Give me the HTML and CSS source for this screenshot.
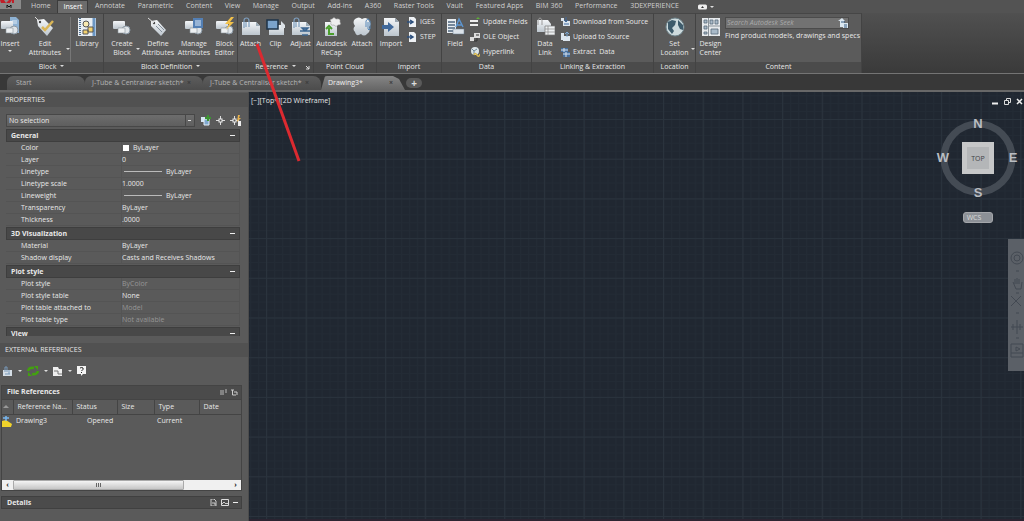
FILE: index.html
```
<!DOCTYPE html>
<html lang="en">

<head>
    <meta charset="UTF-8">
    <meta name="viewport" content="width=device-width, initial-scale=1.0">
    <title>Drawing3</title>
    <link rel="stylesheet" href="styles.css">
</head>

<body>
    <!-- Shared icons -->
    <svg class="defs" width="0" height="0" aria-hidden="true">
        <linearGradient id="face" x1="0" y1="0" x2="0" y2="1">
            <stop offset="0" stop-color="#f4f6f8" />
            <stop offset="1" stop-color="#bcc5cd" />
        </linearGradient>
        <symbol id="blocks" viewBox="0 0 20 20">
            <rect x="1" y="4" width="12" height="8" rx="1" fill="url(#face)" />
            <circle cx="14" cy="13" r="4" fill="#dfe4e8" stroke="#8b99a5" />
            <path d="M6 11h7v5H6z" fill="#edf0f2" stroke="#8a949c" stroke-width=".6" />
        </symbol>
        <symbol id="page" viewBox="0 0 20 20">
            <path d="M1 5h14l4 4v9H1z" fill="url(#face)" />
            <path d="M15 5v4h4" fill="#9cabb6" />
        </symbol>
        <symbol id="clip" viewBox="0 0 20 20">
            <path d="M3 11V4q0-3 2.500-3T8 4v6M5 10V5" fill="none" stroke="#7d9dbd" stroke-width="1.200" />
        </symbol>
        <symbol id="smallpage" viewBox="0 0 10 10">
            <path d="M2 0h5l2 2v8H2z" fill="#eef1f4" />
            <path d="M0 5h5M3 3l3 2-3 2" fill="none" stroke="#2c4f7c" stroke-width="1.500" />
        </symbol>
    </svg>

    <nav class="menu">
        <button class="app-button" aria-label="Application menu">
            <svg width="20" height="9" viewBox="0 0 20 9"><path d="M0 0h4l2 3 3-3h3l-2 3H1zM12 0h2v3h-2z" fill="#c01f29" /><path d="M7 8V5l2 2 2-2v3" fill="none" stroke="#111" /></svg>
        </button>
        <div class="menu-links">
            <a href="#">Home</a>
            <a href="#" class="current">Insert</a>
            <a href="#">Annotate</a>
            <a href="#">Parametric</a>
            <a href="#">Content</a>
            <a href="#">View</a>
            <a href="#">Manage</a>
            <a href="#">Output</a>
            <a href="#">Add-ins</a>
            <a href="#">A360</a>
            <a href="#">Raster Tools</a>
            <a href="#">Vault</a>
            <a href="#">Featured Apps</a>
            <a href="#">BIM 360</a>
            <a href="#">Performance</a>
            <a href="#">3DEXPERIENCE</a>
        </div>
        <button class="minimize" aria-label="Minimize ribbon">
            <svg width="16" height="6" viewBox="0 0 16 6"><rect width="9" height="5" y=".5" rx="1.500" fill="#eee" /><path d="M3 4l1.500-2L6 4z" fill="#333" /><path d="M12 2h4l-2 2z" fill="#ddd" /></svg>
        </button>
    </nav>

    <div class="ribbon">
        <section class="panel block">
            <div class="tools">
                <button class="tool">
                    <svg class="icon" viewBox="0 0 20 20"><path d="M10 0h6l3 3v13h-9z" fill="#8eb2d4" /><path d="M12 4h5M12 6h5" stroke="#dfeaf4" /><use href="#blocks" /></svg>
                    <span>Insert</span><i class="arrow"></i>
                </button>
                <button class="tool has-side-arrow">
                    <svg class="icon" viewBox="0 0 20 20"><path d="M2 3l7-1 9 9-6 8-9-10z" fill="url(#face)" /><path d="M0 0l5 5" stroke="#ddd" /><circle cx="5" cy="5" r="1.200" fill="#444" /><path d="M7 10l3 3 8-9" fill="none" stroke="#d9b557" stroke-width="2.500" /></svg>
                    <span>Edit<br>Attributes</span><i class="arrow"></i>
                </button>
                <button class="tool divided">
                    <svg class="icon" viewBox="0 0 20 20"><rect x="1" y="1" width="18" height="18" fill="#e9eef2" /><path d="M3 1v18" stroke="#4d6e91" stroke-width="2" stroke-dasharray="1 1" /><path d="M17 1v18" stroke="#6b97c4" stroke-width="3" /><circle cx="9" cy="7" r="3" fill="#f8e9af" stroke="#555" /><path d="M6 13h5v4H6zM11 10h5v5h-5z" fill="#f3d16e" stroke="#555" /></svg>
                    <span>Library</span>
                </button>
            </div>
            <h2>Block <i class="arrow"></i></h2>
        </section>

        <section class="panel definition">
            <div class="tools">
                <button class="tool has-side-arrow">
                    <svg class="icon" viewBox="0 0 20 20"><use href="#blocks" /></svg>
                    <span>Create<br>Block</span><i class="arrow"></i>
                </button>
                <button class="tool">
                    <svg class="icon" viewBox="0 0 20 20"><path d="M3 4l6-1 9 10-5 6L3 9z" fill="url(#face)" /><path d="M8 9l6 6M10 7l6 6" stroke="#84909c" /><circle cx="6" cy="6" r="1.200" fill="#444" /><path d="M0 1l6 5" stroke="#ddd" /></svg>
                    <span>Define<br>Attributes</span>
                </button>
                <button class="tool">
                    <svg class="icon" viewBox="0 0 20 20"><use href="#blocks" /><rect x="9" y="1" width="10" height="10" fill="#537fb4" /><path d="M11 4h6M11 6h6M11 8h6" stroke="#dce9f6" /></svg>
                    <span>Manage<br>Attributes</span>
                </button>
                <button class="tool">
                    <svg class="icon" viewBox="0 0 20 20"><use href="#blocks" /><path d="M16 0l-6 7h4l-3 6 8-8h-4l4-5z" fill="#f2c14a" /></svg>
                    <span>Block<br>Editor</span>
                </button>
            </div>
            <h2>Block Definition <i class="arrow"></i></h2>
        </section>

        <section class="panel reference">
            <div class="tools">
                <button class="tool">
                    <svg class="icon" viewBox="0 0 20 20"><use href="#page" /><use href="#clip" /></svg>
                    <span>Attach</span>
                </button>
                <button class="tool">
                    <svg class="icon" viewBox="0 0 20 20"><path d="M3 8h15v10H3z" fill="url(#face)" /><path d="M1 3h11v9H1z" fill="#7ba3cb" stroke="#1e3348" stroke-width="1.500" /><path d="M15 4l4 4v3h-4z" fill="#dce2e7" /></svg>
                    <span>Clip</span>
                </button>
                <button class="tool">
                    <svg class="icon" viewBox="0 0 20 20"><use href="#page" /><use href="#clip" /><path d="M9 14h10M11 11h6l-3 3zM11 18h6" fill="#5b83af" stroke="#3c658f" stroke-width="1.500" /></svg>
                    <span>Adjust</span>
                </button>
            </div>
            <h2>Reference <i class="arrow"></i><button class="launcher" aria-label="Open external references"><svg width="5" height="5" viewBox="0 0 5 5"><path d="M1 1l3 3M4 1v3H1" fill="none" stroke="#ddd" /></svg></button></h2>
        </section>

        <section class="panel cloud">
            <div class="tools">
                <button class="tool">
                    <svg class="icon" viewBox="0 0 20 20"><path d="M3 5h12v14H3z" fill="url(#face)" /><path d="M10 2q2-3 4 0 5-1 4 3 2 3-2 3-2 3-4 0-4 1-3-3-2-3 1-3z" fill="#eee" stroke="#888" stroke-width=".5" /><path d="M12 17H7v-6M4 12l3-3 3 3" fill="none" stroke="#4a9e2b" stroke-width="2" /></svg>
                    <span>Autodesk<br>ReCap</span>
                </button>
                <button class="tool">
                    <svg class="icon" viewBox="0 0 20 20"><path d="M3 2q4-3 7 0 5-3 7 2 3 3 0 6 2 5-2 7-3 3-6 0-5 3-6-2-3-3 0-6-3-4 0-7z" fill="url(#face)" /><path d="M14 10V4q2-4 4 0v8q-1 2-2 0V5" fill="none" stroke="#5989b9" /></svg>
                    <span>Attach</span>
                </button>
            </div>
            <h2>Point Cloud</h2>
        </section>

        <section class="panel import">
            <div class="tools">
                <button class="tool">
                    <svg class="icon" viewBox="0 0 20 20"><path d="M3 1h11l4 4v14H3z" fill="url(#face)" /><path d="M14 1v4h4" fill="#97a4af" /><path d="M1 8h6V5l6 5-6 5v-3H1z" fill="#41699b" /></svg>
                    <span>Import</span>
                </button>
                <div class="list">
                    <button><svg viewBox="0 0 10 10"><use href="#smallpage" /></svg>IGES</button>
                    <button><svg viewBox="0 0 10 10"><use href="#smallpage" /></svg>STEP</button>
                </div>
            </div>
            <h2>Import</h2>
        </section>

        <section class="panel data">
            <div class="tools">
                <button class="tool">
                    <svg class="icon" viewBox="0 0 20 20"><path d="M2 2h9v14H2z" fill="#e8edf1" /><path d="M3 5h7M3 8h7M3 11h7M3 14h5" stroke="#4f667d" stroke-width="1.500" /><path d="M11 10l3-8 4 8M12 8h5" fill="none" stroke="#5d95cf" stroke-width="1.500" /><path d="M8 12h11v5H8z" fill="#dce3ea" stroke="#6a7e92" stroke-width=".5" /></svg>
                    <span>Field</span>
                </button>
                <div class="list">
                    <button><svg viewBox="0 0 10 10"><path d="M0 4h8M0 8h8" stroke="#eee" stroke-width="2" /><path d="M6 2l2-2 2 2" fill="#5fae39" /></svg>Update Fields</button>
                    <button><svg viewBox="0 0 10 10"><path d="M4 1h6v5H4zM0 5h4v4H0z" fill="#ddd" /><path d="M6 3h3M7 6v3H4" fill="none" stroke="#333" /></svg>OLE Object</button>
                    <button><svg viewBox="0 0 10 10"><circle cx="5" cy="4" r="4" fill="#dbe4e8" /><path d="M2 2l2 2 3-2M4 4v4" stroke="#6e8797" fill="none" /><path d="M4 8q1-3 3 0t3-1" fill="none" stroke="#d9b84c" stroke-width="1.500" /></svg>Hyperlink</button>
                </div>
            </div>
            <h2>Data</h2>
        </section>

        <section class="panel linking">
            <div class="tools">
                <button class="tool">
                    <svg class="icon" viewBox="0 0 20 20"><path d="M2 3h11l3 4v8H2z" fill="url(#face)" /><path d="M3 8V3q2-4 4 0v5" fill="none" stroke="#999" /><path d="M10 9h10v9H10z" fill="#edf0f2" stroke="#777" stroke-width=".7" /><path d="M10 12h10M10 15h10M13 9v9" stroke="#888" stroke-width=".7" /></svg>
                    <span>Data<br>Link</span>
                </button>
                <div class="list">
                    <button><svg viewBox="0 0 10 10"><path d="M1 1h3v3H1zM3 4h7v5H3z" fill="#dce5ee" /><path d="M6 0v4M4 3l2 2 2-2M4 7h5" fill="none" stroke="#416b9e" /></svg>Download from Source</button>
                    <button><svg viewBox="0 0 10 10"><path d="M1 1h3v7H1zM3 4h7v5H3z" fill="#dce5ee" /><path d="M7 5V0M5 2l2-2 2 2" fill="none" stroke="#7ba5d0" /></svg>Upload to Source</button>
                    <button><svg viewBox="0 0 10 10"><path d="M1 1h7v4H1zM3 5h7v5H3z" fill="#46709f" /><path d="M1 3h7M4 1v4M3 7h7M6 5v5" stroke="#d6e2ef" /></svg>Extract&nbsp; Data</button>
                </div>
            </div>
            <h2>Linking &amp; Extraction</h2>
        </section>

        <section class="panel location">
            <div class="tools">
                <button class="tool has-side-arrow">
                    <svg class="icon" viewBox="0 0 20 20"><circle cx="10" cy="10" r="9" fill="#cddadd" stroke="#6f858d" /><path d="M3 5l4-2 4 1-1 4-3 3 2 3-2 3-4-5zM13 3l5 5v5l-3-1-2-4z" fill="#3e5b6b" /></svg>
                    <span>Set<br>Location</span><i class="arrow"></i>
                </button>
            </div>
            <h2>Location</h2>
        </section>

        <section class="panel content">
            <div class="tools">
                <button class="tool">
                    <svg class="icon" viewBox="0 0 20 20"><path d="M1 1h18v18H1z" fill="#e7eaed" /><path d="M3 3h3v3H3zM3 9h3v3H3zM3 15h3v2H3zM9 3h3v4H9zM14 3h3v4h-3zM10 12h7v5h-7z" fill="#a9bac9" stroke="#596a78" stroke-width=".8" /><path d="M7.500 1v18M8 9h11" stroke="#8a939a" /></svg>
                    <span>Design<br>Center</span>
                </button>
                <div class="seek">
                    <div class="search-box">
                        <input type="text" placeholder="Search Autodesk Seek" aria-label="Search Autodesk Seek">
                        <button aria-label="Search"><svg width="10" height="10" viewBox="0 0 10 10"><path d="M0 3l4-3 3 3zM2 3h4v6H2zM5 5h5v5H5z" fill="#dbe7f0" /><path d="M6 7h3M6 9h3M3 4h4" stroke="#365b80" /></svg></button>
                    </div>
                    <p>Find product models, drawings and specs</p>
                </div>
            </div>
            <h2>Content</h2>
        </section>
    </div>

    <div class="file-tabs">
        <a href="#" class="start">Start</a>
        <a href="#">J-Tube &amp; Centraliser sketch* <b>×</b></a>
        <a href="#">J-Tube &amp; Centraliser sketch* <b>×</b></a>
        <a href="#" class="active">Drawing3* <b>×</b></a>
        <button aria-label="New drawing">+</button>
    </div>

    <main>
        <aside>
            <section class="palette properties">
                <h1>PROPERTIES</h1>
                <div class="selection">
                    <select aria-label="Selection">
                        <option>No selection</option>
                    </select>
                    <button aria-label="Toggle pickadd"><svg width="11" height="11" viewBox="0 0 11 11"><path d="M1 2h6v5H1z" fill="#d6e6f4" /><path d="M4 4h5v6H4z" fill="#7fa8cf" stroke="#e5eef6" /><path d="M8 0v6M5 3h6" stroke="#3c9431" stroke-width="2" /></svg></button>
                    <button aria-label="Select objects"><svg width="11" height="11" viewBox="0 0 11 11"><path d="M5.500 1v9M1 5.500h9" stroke="#ddd" /><rect x="4" y="4" width="3" height="3" fill="#555" stroke="#eee" /></svg></button>
                    <button aria-label="Quick select"><svg width="11" height="11" viewBox="0 0 11 11"><path d="M4.500 1v9M0 5.500h9" stroke="#ddd" /><rect x="3" y="4" width="3" height="3" fill="#555" stroke="#eee" /><path d="M8 0h2L9 3h2L7 7z" fill="#e9b34d" /><path d="M8 6h3v5H8z" fill="#eee" /></svg></button>
                </div>
                <div class="groups">
                    <h3>General <button aria-label="Collapse General"></button></h3>
                    <table>
                        <tr><th>Color</th><td><i class="swatch"></i>ByLayer</td></tr>
                        <tr><th>Layer</th><td>0</td></tr>
                        <tr><th>Linetype</th><td><i class="line"></i>ByLayer</td></tr>
                        <tr><th>Linetype scale</th><td>1.0000</td></tr>
                        <tr><th>Lineweight</th><td><i class="line"></i>ByLayer</td></tr>
                        <tr><th>Transparency</th><td>ByLayer</td></tr>
                        <tr><th>Thickness</th><td>.0000</td></tr>
                    </table>
                    <h3>3D Visualization <button aria-label="Collapse 3D Visualization"></button></h3>
                    <table>
                        <tr><th>Material</th><td>ByLayer</td></tr>
                        <tr><th>Shadow display</th><td>Casts and Receives Shadows</td></tr>
                    </table>
                    <h3>Plot style <button aria-label="Collapse Plot style"></button></h3>
                    <table>
                        <tr><th>Plot style</th><td class="off">ByColor</td></tr>
                        <tr><th>Plot style table</th><td>None</td></tr>
                        <tr><th>Plot table attached to</th><td class="off">Model</td></tr>
                        <tr><th>Plot table type</th><td class="off">Not available</td></tr>
                    </table>
                    <h3>View <button aria-label="Collapse View"></button></h3>
                </div>
            </section>

            <section class="palette xrefs">
                <h1>EXTERNAL REFERENCES</h1>
                <div class="toolbar">
                    <button aria-label="Attach file"><svg width="10" height="10" viewBox="0 0 10 10"><path d="M0 4h9v6H0z" fill="#d5dee6" /><path d="M2 6V1h2v5M6 4v4M2 8h5" fill="none" stroke="#7899ba" /></svg><i class="arrow"></i></button>
                    <button aria-label="Refresh"><svg width="12" height="10" viewBox="0 0 12 10"><path d="M1 5q1-4 6-3M11 5q-1 4-6 3" fill="none" stroke="#43a010" stroke-width="2.500" /><path d="M7 0h4v4zM1 6v4h4z" fill="#43a010" /></svg><i class="arrow"></i></button>
                    <button aria-label="Change path"><svg width="10" height="10" viewBox="0 0 10 10"><path d="M0 1h5l1 2h3v7H0z" fill="#eee" /><path d="M1 5h4M5 5v3h4" fill="none" stroke="#777" /></svg><i class="arrow"></i></button>
                    <button aria-label="Help"><svg width="9" height="10" viewBox="0 0 9 10"><path d="M0 0h9v8H6l-2 2V8H0z" fill="#f4f4f4" /><path d="M3 2q2-1 3 0t-1.500 3M4.500 6v1" fill="none" stroke="#222" /></svg></button>
                </div>
                <div class="files">
                    <h3>File References
                        <button aria-label="List view"><svg width="7" height="7" viewBox="0 0 7 7"><path d="M1 1v5M3 1v5M5 1h2M5 3h2" stroke="#bbb" /></svg></button>
                        <button aria-label="Tree view"><svg width="7" height="7" viewBox="0 0 7 7"><path d="M0 1h3M1.500 1v5H5M3 3h3v3" fill="none" stroke="#ccc" /></svg></button>
                    </h3>
                    <table>
                        <thead>
                            <tr><th class="mark"><i class="sort"></i></th><th class="name">Reference Na...</th><th class="status">Status</th><th class="size">Size</th><th class="type">Type</th><th>Date</th></tr>
                        </thead>
                        <tbody>
                            <tr><td class="mark"><svg width="10" height="11" viewBox="0 0 10 11"><path d="M0 5l4-1 6 4-1 3H0z" fill="#f1d32b" /><path d="M4 0v5M1 2h6" stroke="#78b7ef" stroke-width="1.500" /></svg></td><td>Drawing3</td><td class="opened">Opened</td><td></td><td>Current</td><td></td></tr>
                        </tbody>
                    </table>
                    <div class="scrollbar"><button aria-label="Scroll left">‹</button><div class="track"><div class="thumb"><i></i><i></i><i></i></div></div><button aria-label="Scroll right">›</button></div>
                </div>
                <div class="details">
                    <h3>Details
                        <button aria-label="Details"><svg width="7" height="7" viewBox="0 0 7 7"><path d="M1 0h3l2 2v5H1zM2 4h3v2" fill="none" stroke="#ccc" /></svg></button>
                        <button aria-label="Preview"><svg width="8" height="7" viewBox="0 0 8 7"><path d="M.5.500h7v6h-7z" fill="none" stroke="#ddd" /><path d="M1 5l2-2 2 2 1-1 1 1" fill="none" stroke="#ccc" /></svg></button>
                        <button class="collapse" aria-label="Collapse Details"></button>
                    </h3>
                </div>
            </section>
        </aside>

        <div class="viewport">
            <svg class="grid" width="100%" height="100%" aria-hidden="true">
                <pattern id="minor" x="17" y="27" width="7.940" height="7.940" patternUnits="userSpaceOnUse">
                    <path d="M.5 0v8M0 .5h8" stroke="#232b35" fill="none" />
                </pattern>
                <pattern id="major" x="17" y="27" width="39.700" height="39.700" patternUnits="userSpaceOnUse">
                    <path d="M.5 0v40M0 .5h40" stroke="#2a333d" fill="none" />
                </pattern>
                <rect width="100%" height="100%" fill="url(#minor)" />
                <rect width="100%" height="100%" fill="url(#major)" />
            </svg>
            <div class="view-label">[−][Top*][2D Wireframe]</div>
            <div class="window-buttons">
                <button aria-label="Minimize"><svg width="7" height="7" viewBox="0 0 7 7"><path d="M0 5.500h6" stroke="#eee" stroke-width="2" /></svg></button>
                <button aria-label="Restore"><svg width="7" height="7" viewBox="0 0 7 7"><path d="M2.500 2V.5h4v4H5M.5 2.500h4v4h-4z" fill="none" stroke="#ddd" /></svg></button>
                <button aria-label="Close"><svg width="7" height="7" viewBox="0 0 7 7"><path d="M1 1l5 5M6 1L1 6" stroke="#eee" stroke-width="1.500" /></svg></button>
            </div>
            <div class="cube">
                <svg width="76" height="76" viewBox="0 0 76 76" aria-hidden="true"><circle cx="38" cy="38" r="34" fill="none" stroke="#444b54" stroke-width="7" /></svg>
                <span class="north">N</span><span class="south">S</span><span class="west">W</span><span class="east">E</span>
                <button class="face">TOP</button>
            </div>
            <button class="wcs">WCS</button>
            <div class="navbar">
                <svg width="16" height="132" viewBox="0 0 16 132" fill="none" stroke="#434952" aria-hidden="true">
                    <circle cx="9" cy="19" r="6" /><circle cx="9" cy="19" r="3" />
                    <path d="M8 32h3M5 43l3 7h5l1-7M7 45v-5M9 45v-6M11 45v-5M8 54h3" />
                    <path d="M3 57l10 10M13 57L3 67M8 74h3" />
                    <path d="M9 81v14M3 88h12M5 85v6M12 85v6M8 99h3" />
                    <path d="M3 105h12v13H3zM3 114h12M8 108l4 2-4 2z" />
                </svg>
            </div>
        </div>
    </main>

    <!-- Red pointer line from the Attach tool -->
    <svg class="pointer" width="50" height="124" viewBox="0 0 50 124" aria-hidden="true"><path d="M4 3l42 117" stroke="#dc2a30" stroke-width="3" /></svg>
</body>

</html>
```
FILE: styles.css
```
* {
    box-sizing: border-box;
}

body {
    display: flex;
    flex-direction: column;
    height: 100vh;
    margin: 0;
    overflow: hidden;
    background-color: #5a5a5a;
    color: #e8e8e8;
    font-family: "Open Sans", "Noto Sans", sans-serif;
    font-size: 7px;
    line-height: 10px;
}

h1, h2, h3, p {
    margin: 0;
    font-size: 7px;
}

a {
    color: inherit;
    text-decoration: none;
}

button {
    margin: 0;
    padding: 0;
    border: none;
    background: none;
    color: inherit;
    font: inherit;
    cursor: pointer;
}

svg {
    display: block;
}

.defs {
    position: absolute;
}

.arrow {
    display: inline-block;
    border: 2px solid transparent;
    border-top-color: #ddd;
    border-bottom: none;
}

/* Menu */
.menu {
    display: flex;
    height: 13px;
    background-color: #535353;
    color: #d0d0d0;
    line-height: 12px;
}

.menu-links {
    display: flex;
    justify-content: space-between;
    width: 660px;
}

.menu a {
    padding: 0 6px;
}

.menu .current {
    padding: 0 5px;
    border: 1px solid #3c3c3c;
    border-bottom: none;
    background-color: #6c6c6c;
    color: #fff;
    line-height: 11px;
}

.app-button {
    width: 21px;
    height: 9px;
    margin-right: 4px;
    background-color: #8a8a8a;
}

.minimize {
    margin-left: 13px;
}

/* Ribbon */
.ribbon {
    display: flex;
    height: 61px;
    border-bottom: 1px solid #747474;
    background: linear-gradient(#505050, #3a3a3a);
}

.panel {
    display: flex;
    flex-direction: column;
    flex: none;
    border-right: 1px solid #434343;
    border-top: 1px solid #464646;
    background-color: #5b5b5b;
}

.panel h2 {
    position: relative;
    height: 11px;
    background-color: #4b4b4b;
    font-weight: normal;
    text-align: center;
}

.panel h2 .arrow {
    margin: 0 0 2px 2px;
}

.tools {
    display: flex;
    flex: 1;
    padding-top: 3px;
}

.tool {
    display: flex;
    flex-direction: column;
    align-items: center;
    position: relative;
    width: 26px;
    line-height: 9px;
    white-space: nowrap;
}

.tool .icon {
    width: 20px;
    height: 20px;
    margin-bottom: 2px;
}

.tool .arrow {
    margin-top: 2px;
}

.has-side-arrow .arrow {
    position: absolute;
    right: 0;
    bottom: 12px;
}

.block { width: 104px; }
.block .tool { width: 20px; }
.block .has-side-arrow { width: 50px; }
.block .divided { width: 33px; border-left: 1px solid #777; }
.definition { width: 134px; }
.definition .tool { width: 36px; }
.definition .tool:last-child { width: 25px; }
.reference { width: 76px; }
.reference .tool { width: 25px; }
.cloud { width: 63px; }
.cloud .tool:first-child { width: 35px; }
.import { width: 65px; }
.import .tool { width: 28px; }
.data { width: 90px; }
.linking { width: 122px; }
.location { width: 42px; }
.location .tool { width: 42px; }
.content { width: 166px; }
.content .tool { width: 29px; }

.launcher {
    position: absolute;
    right: 3px;
    top: 3px;
}

.list {
    display: flex;
    flex-direction: column;
    gap: 5px;
    padding-left: 2px;
}

.list button {
    display: flex;
    align-items: center;
    gap: 3px;
    white-space: nowrap;
}

.list svg {
    width: 10px;
    height: 10px;
}

.seek p {
    margin-top: 2px;
    white-space: nowrap;
}

.search-box {
    display: flex;
    align-items: center;
    width: 124px;
    height: 12px;
    border: 1px solid #4b4b4b;
    background-color: #727272;
}

.search-box input {
    flex: 1;
    min-width: 0;
    padding: 0 1px;
    border: none;
    background: none;
    color: #eee;
    font: inherit;
    font-style: italic;
}

.search-box input::placeholder {
    color: #aaa;
}

/* Drawing tabs */
.file-tabs {
    display: flex;
    align-items: flex-end;
    height: 18px;
    padding-left: 7px;
    border-bottom: 2px solid #686868;
    background-color: #383838;
    color: #b4b4b4;
}

.file-tabs a {
    display: flex;
    justify-content: space-between;
    width: 118px;
    height: 14px;
    padding: 0 12px 0 7px;
    border-radius: 6px 8px 0 0;
    background: linear-gradient(#5d5d5d, #4c4c4c);
    line-height: 14px;
    white-space: nowrap;
}

.file-tabs .start {
    width: 78px;
    padding-left: 9px;
}

.file-tabs .active {
    width: 84px;
    background: linear-gradient(#858585, #666);
    color: #eee;
    clip-path: polygon(4px 0, 72px 0, 78px 3px, 84px 100%, 0 100%);
}

.file-tabs b {
    color: #3c3c3c;
}

.file-tabs button {
    width: 16px;
    height: 10px;
    margin: 0 0 2px 1px;
    border-radius: 5px;
    background-color: #5a5a5a;
    color: #ddd;
    font-size: 10px;
    font-weight: bold;
}

main {
    display: flex;
    flex: 1;
    min-height: 0;
}

/* Palettes */
aside {
    display: flex;
    flex-direction: column;
    width: 249px;
    border-right: 1px solid #4c4c4c;
}

.palette {
    display: flex;
    flex-direction: column;
    min-height: 0;
}

.palette h1 {
    flex: none;
    height: 14px;
    padding: 0 5px;
    background-color: #515151;
    font-weight: normal;
    line-height: 14px;
}

.properties {
    flex: 7 1 0;
    padding-top: 1px;
}

.xrefs {
    flex: 5 1 0;
}

.selection {
    display: flex;
    align-items: center;
    gap: 4px;
    margin: 7px 7px 2px 6px;
}

.selection select {
    flex: 1;
    height: 13px;
    margin-right: 1px;
    padding: 0 2px;
    appearance: none;
    border: 1px solid #474747;
    border-radius: 0;
    background: linear-gradient(#ddd, #ddd) right 3px center / 3px 1px no-repeat, linear-gradient(#484848, #484848) right 8px center / 1px 100% no-repeat, linear-gradient(#6d6d6d, #5e5e5e);
    color: inherit;
    font: inherit;
}

.groups {
    flex: 1;
    min-height: 0;
    margin: 0 8px 7px 6px;
    overflow: hidden;
}

.groups h3 {
    display: flex;
    justify-content: space-between;
    align-items: center;
    height: 13px;
    padding: 0 4px;
    border: 1px solid #3e3e3e;
    background-color: #484848;
}

.groups h3 button, .details .collapse {
    width: 5px;
    height: 1px;
    background-color: #eee;
}

.groups table {
    width: 100%;
    margin-bottom: 1px;
    border-spacing: 0;
    table-layout: fixed;
}

.groups th, .groups td {
    height: 12px;
    padding: 0;
    border-bottom: 1px solid #545454;
    border-right: 1px solid #545454;
    text-align: left;
    white-space: nowrap;
}

.groups th {
    width: 116px;
    padding-left: 15px;
    font-weight: normal;
}

.groups .off {
    color: #969696;
}

.swatch, .line {
    display: inline-block;
    width: 38px;
    height: 1px;
    margin: 0 4px 2px 2px;
    background-color: #bbb;
}

.swatch {
    width: 6px;
    height: 6px;
    margin: 0 4px 0 1px;
    background-color: #fff;
    vertical-align: -1px;
}

.toolbar {
    display: flex;
    flex: none;
    align-items: center;
    gap: 5px;
    height: 28px;
    padding-left: 3px;
}

.toolbar button {
    display: flex;
    align-items: center;
    gap: 5px;
}

.files {
    display: flex;
    flex: 1;
    flex-direction: column;
    margin: 0 6px 0 1px;
    border: 1px solid #444;
}

.files h3, .details h3 {
    display: flex;
    flex: none;
    align-items: center;
    gap: 4px;
    height: 13px;
    padding: 0 3px 0 5px;
    background-color: #4b4b4b;
}

.files h3 button:first-of-type, .details h3 button:first-of-type {
    margin-left: auto;
}

.files table {
    width: 100%;
    border-collapse: collapse;
    table-layout: fixed;
}

.files th, .files td {
    height: 14px;
    padding: 0 0 0 3px;
    font-weight: normal;
    text-align: left;
    white-space: nowrap;
}

.files th {
    height: 15px;
    padding-left: 4px;
    border: 1px solid #444;
    border-width: 1px 0 1px 1px;
}

.files .mark { width: 11px; padding: 0; border-left: none; }
.files .name { width: 59px; }
.files .status { width: 45px; }
.files .size { width: 37px; }
.files .type { width: 45px; }
.files .opened { padding-left: 15px; }

.sort {
    display: block;
    width: 6px;
    margin-left: 1px;
    border: 3px solid transparent;
    border-top: none;
    border-bottom-color: #999;
}

.scrollbar {
    display: flex;
    height: 10px;
    margin-top: auto;
    background-color: #f0f0f0;
    color: #222;
    line-height: 8px;
}

.scrollbar button {
    width: 11px;
    font-weight: bold;
}

.track {
    flex: 1;
}

.thumb {
    display: flex;
    justify-content: center;
    align-items: center;
    gap: 1px;
    width: 79%;
    height: 10px;
    border: 1px solid #aaa;
    border-radius: 1px;
    background: linear-gradient(#f4f4f4, #c6c6c6);
}

.thumb i {
    width: 1px;
    height: 4px;
    background-color: #666;
}

.details {
    flex: none;
    height: 30px;
    margin: 0 6px 0 1px;
    padding-top: 5px;
}

.details h3 {
    border: 1px solid #404040;
}

/* Drawing area */
.viewport {
    position: relative;
    flex: 1;
    overflow: hidden;
    background-color: #202731;
    border-bottom: 2px solid #2b2431;
}

.view-label {
    position: absolute;
    top: 4px;
    left: 2px;
}

.window-buttons {
    display: flex;
    gap: 5px;
    position: absolute;
    top: 6px;
    right: 1px;
}

.cube {
    position: absolute;
    top: 28px;
    right: 8px;
    color: #b9bdc2;
    font: bold 13px "Liberation Sans", sans-serif;
}

.cube span {
    position: absolute;
    width: 14px;
    line-height: 14px;
    text-align: center;
}

.cube .north { top: -3px; left: 31px; }
.cube .south { bottom: -4px; left: 31px; }
.cube .west { top: 31px; left: -4px; }
.cube .east { top: 31px; right: -4px; }

.cube .face {
    position: absolute;
    top: 22px;
    left: 22px;
    width: 32px;
    height: 32px;
    padding: 0;
    border: 5px solid #c6c7c8;
    background-color: #b4b6b8;
    color: #3d4146;
    font: 7px "Open Sans", sans-serif;
}

.wcs {
    position: absolute;
    top: 120px;
    right: 31px;
    width: 30px;
    height: 11px;
    padding-right: 8px;
    border: 1px solid #a4a6aa;
    border-radius: 3px;
    background-color: #8c9096;
    color: #d8d8d8;
    line-height: 8px;
}

.navbar {
    position: absolute;
    top: 147px;
    right: 0;
    background-color: #5b6067;
}

.pointer {
    position: absolute;
    top: 41px;
    left: 253px;
    pointer-events: none;
}
```
